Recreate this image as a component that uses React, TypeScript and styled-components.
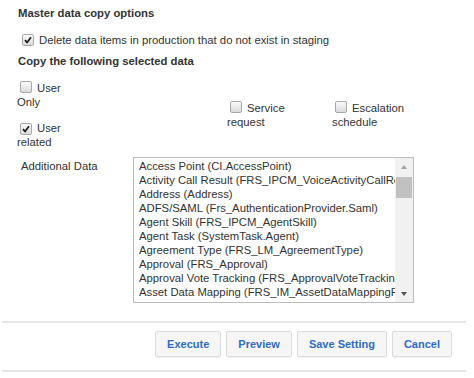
import React from 'react';
import styled, {createGlobalStyle} from 'styled-components';

const GlobalStyle = createGlobalStyle`
    * {
        box-sizing: border-box;
    }
    body {
        margin: 0;
        background: #ffffff;
        color: #333333;
        font-family: "Liberation Sans", Arial, sans-serif;
        font-size: 11.3px;
    }
`;

const dataItems = [
    'Access Point (CI.AccessPoint)',
    'Activity Call Result (FRS_IPCM_VoiceActivityCallResult)',
    'Address (Address)',
    'ADFS/SAML (Frs_AuthenticationProvider.Saml)',
    'Agent Skill (FRS_IPCM_AgentSkill)',
    'Agent Task (SystemTask.Agent)',
    'Agreement Type (FRS_LM_AgreementType)',
    'Approval (FRS_Approval)',
    'Approval Vote Tracking (FRS_ApprovalVoteTracking)',
    'Asset Data Mapping (FRS_IM_AssetDataMappingRule)',
];

const CheckIcon = () => (
    <svg width="8" height="8" viewBox="0 0 8 8">
        <path d="M1 4.2 L3.1 6.4 L7 1.2" fill="none" stroke="#1a1a1a" strokeWidth="1.7" />
    </svg>
);

const CheckBox = ({checked}: {checked?: boolean}) => (
    <Box>{checked && <CheckIcon />}</Box>
);

// checkbox and first word stay together, the rest wraps below
const Choice = ({first, rest, checked}: {first: string, rest: string, checked?: boolean}) => (
    <Option>
        <Lead><CheckBox checked={checked} />{first}</Lead> {rest}
    </Option>
);

class CopyOptions extends React.Component {

    public render() {
        return (
            <Page>
                <GlobalStyle />
                <SectionTitle>Master data copy options</SectionTitle>
                <CheckRow>
                    <CheckBox checked />
                    <span>Delete data items in production that do not exist in staging</span>
                </CheckRow>
                <SectionTitle $top={5}>Copy the following selected data</SectionTitle>
                <OptionGrid>
                    <OptionStack>
                        <Choice first="User" rest="Only" />
                        <Choice first="User" rest="related" checked />
                    </OptionStack>
                    <div></div>
                    <Choice first="Service" rest="request" />
                    <Choice first="Escalation" rest="schedule" />
                </OptionGrid>
                <DataRow>
                    <DataLabel>Additional Data</DataLabel>
                    <ListBox>
                        <ListItems>
                            {dataItems.map(item => <ListItem key={item}>{item}</ListItem>)}
                        </ListItems>
                        <ScrollBar>
                            <ArrowUp />
                            <Thumb />
                            <Track />
                            <ArrowDown />
                        </ScrollBar>
                    </ListBox>
                </DataRow>
                <Divider $top={18} />
                <ButtonBar>
                    <Button>Execute</Button>
                    <Button>Preview</Button>
                    <Button>Save Setting</Button>
                    <Button>Cancel</Button>
                </ButtonBar>
                <Divider $top={13} />
            </Page>
        );
    }
}

const Page = styled.div`
    width: 464px;
    margin-left: 2px;
`;

const SectionTitle = styled.div<{$top?: number}>`
    margin: ${p => p.$top ?? 5}px 0 0 16px;
    font-weight: bold;
    line-height: 16px;
    color: #333333;
`;

const Box = styled.span`
    display: inline-flex;
    align-items: center;
    justify-content: center;
    width: 12px;
    height: 12px;
    margin: 0 5px 0 3px;
    vertical-align: -1px;
    border: 1px solid #a8a8a8;
    border-radius: 2px;
    background: linear-gradient(#fbfbfb, #dadada);
`;

const CheckRow = styled.div`
    display: flex;
    align-items: center;
    margin-top: 11px;
    padding-left: 17px;
    line-height: 16px;

    ${Box} {
        margin-right: 5px;
    }
`;

const OptionGrid = styled.div`
    display: grid;
    grid-template-columns: repeat(4, 105px);
    align-items: center;
    margin-top: 12px;
    padding-left: 15px;
`;

const OptionStack = styled.div`
    display: flex;
    flex-direction: column;
    gap: 12px;
`;

const Option = styled.label`
    display: block;
    width: 60px;
    line-height: 14px;
`;

const Lead = styled.span`
    white-space: nowrap;
`;

const DataRow = styled.div`
    display: flex;
    margin-top: 8px;
`;

const DataLabel = styled.div`
    width: 131px;
    padding: 2px 0 0 19px;
    line-height: 14px;
`;

const ListBox = styled.div`
    display: flex;
    width: 281px;
    height: 146px;
    border: 1px solid #bdbdbd;
    background: #ffffff;
`;

const ListItems = styled.div`
    flex: 1;
    min-width: 0;
    padding-top: 1px;
    overflow: hidden;
`;

const ListItem = styled.div`
    padding-left: 5px;
    line-height: 14px;
    white-space: nowrap;
    overflow: hidden;
    color: #333333;
`;

const ScrollBar = styled.div`
    display: flex;
    flex-direction: column;
    width: 18px;
    background: #f1f1f1;
`;

const ArrowUp = styled.div`
    height: 17px;
    display: flex;
    align-items: center;
    justify-content: center;

    &::before {
        content: '';
        border-left: 3px solid transparent;
        border-right: 3px solid transparent;
        border-bottom: 4px solid #a3a3a3;
    }
`;

const ArrowDown = styled(ArrowUp)`
    &::before {
        border-bottom: none;
        border-top: 4px solid #505050;
    }
`;

const Thumb = styled.div`
    height: 21px;
    margin: 2px 1px 0;
    background: #c1c1c1;
`;

const Track = styled.div`
    flex: 1;
`;

const Divider = styled.div<{$top: number}>`
    height: 2px;
    margin-top: ${p => p.$top}px;
    background: #e6e6e6;
`;

const ButtonBar = styled.div`
    display: flex;
    justify-content: flex-end;
    gap: 5px;
    margin-top: 8px;
    padding-right: 14px;
`;

const Button = styled.button`
    height: 26px;
    padding: 0 11px;
    border: 1px solid #dcdcdc;
    border-radius: 2px;
    background: #f6f6f6;
    color: #2d6cc6;
    font-family: "Liberation Sans", Arial, sans-serif;
    font-size: 11px;
    font-weight: bold;
    box-shadow: 0 1px 1px rgba(0, 0, 0, 0.05);
`;

export default CopyOptions;
